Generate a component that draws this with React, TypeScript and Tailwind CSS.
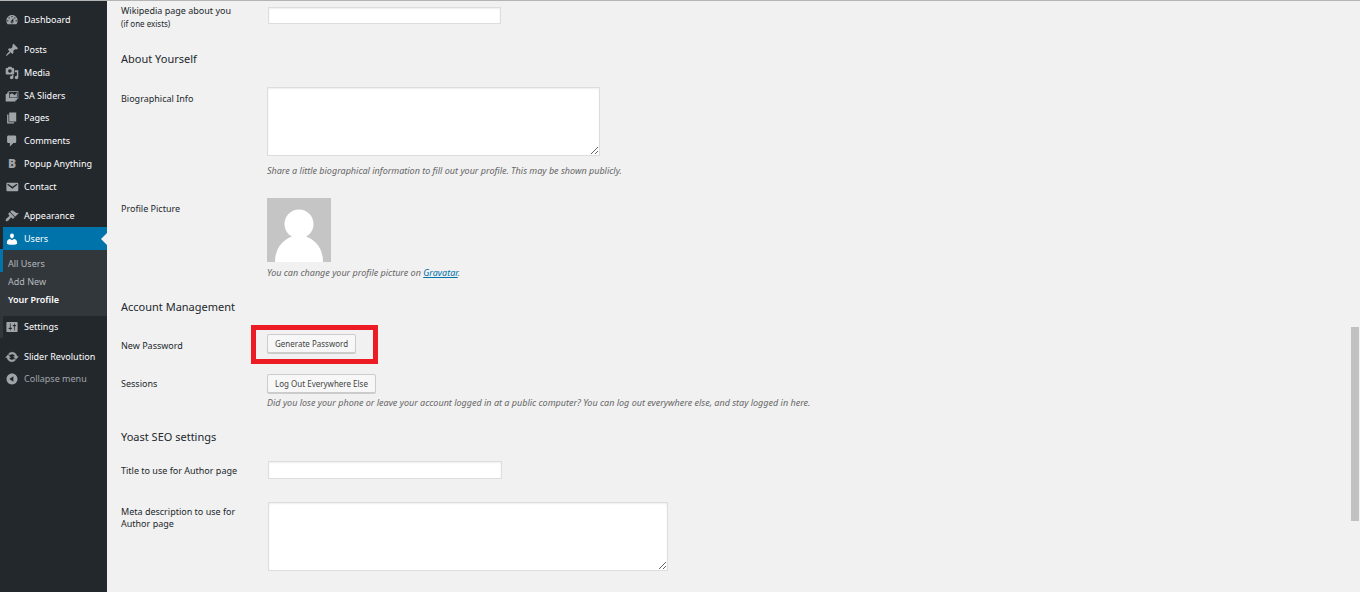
import type { ReactNode } from "react";
import clsx from "clsx";

type Item = { label: string; icon: ReactNode };

function Dashicon({ d, className }: { d: string; className?: string }) {
  return (
    <svg
      viewBox="0 0 20 20"
      className={clsx("h-[14px] w-[14px] shrink-0", className)}
      fill="currentColor"
      fillRule="evenodd"
      aria-hidden
    >
      <path d={d} />
    </svg>
  );
}

const paths = {
  dashboard:
    "M3.76 16h12.48c1.1-1.37 1.76-3.11 1.76-5 0-4.42-3.58-8-8-8s-8 3.58-8 8c0 1.89.66 3.63 1.76 5zM10 4c.55 0 1 .45 1 1s-.45 1-1 1-1-.45-1-1 .45-1 1-1zM6 6c.55 0 1 .45 1 1s-.45 1-1 1-1-.45-1-1 .45-1 1-1zm8 0c.55 0 1 .45 1 1s-.45 1-1 1-1-.45-1-1 .45-1 1-1zm-5.37 5.55L12 7v6c0 1.1-.9 2-2 2s-2-.9-2-2c0-.57.24-1.08.63-1.45zM4 10c.55 0 1 .45 1 1s-.45 1-1 1-1-.45-1-1 .45-1 1-1zm12 0c.55 0 1 .45 1 1s-.45 1-1 1-1-.45-1-1 .45-1 1-1zm-5 3c0-.55-.45-1-1-1s-1 .45-1 1 .45 1 1 1 1-.45 1-1z",
  post: "M10.44 3.02l1.82-1.82 6.36 6.35-1.83 1.82c-1.05-.68-2.48-.57-3.41.36l-.75.75c-.92.93-1.04 2.35-.35 3.41l-1.83 1.82-2.41-2.41-2.8 2.79c-.42.42-3.38 2.71-3.8 2.29s1.86-3.39 2.28-3.81l2.79-2.79L4.1 9.36l1.83-1.82c1.05.69 2.48.57 3.4-.36l.75-.75c.93-.92 1.05-2.35.36-3.41z",
  media:
    "M13 11V4c0-.55-.45-1-1-1h-1.67L9 1H5L3.67 3H2c-.55 0-1 .45-1 1v7c0 .55.45 1 1 1h10c.55 0 1-.45 1-1zM7 4.5c1.38 0 2.5 1.12 2.5 2.5S8.38 9.5 7 9.5 4.5 8.38 4.5 7 5.62 4.5 7 4.5zM14 6h5v10.5c0 1.38-1.12 2.5-2.5 2.5S14 17.88 14 16.5s1.12-2.5 2.5-2.5c.17 0 .34.02.5.05V9h-3V6zm-4 8.05V13h2v3.5c0 1.38-1.12 2.5-2.5 2.5S7 17.88 7 16.5 8.12 14 9.5 14c.17 0 .34.02.5.05z",
  sliders:
    "M5 3h14v11h-2v2h-2v2H1V7h2V5h2V3zm13 10V4H6v9h12zM7 12V8l3-2 4 3 3-4v7H7z",
  page: "M6 15V2h10v13H6zm-1 1h8v2H3V5h2v11z",
  comments:
    "M5 2h9c1.1 0 2 .9 2 2v7c0 1.1-.9 2-2 2h-2l-5 5v-5H5c-1.1 0-2-.9-2-2V4c0-1.1.9-2 2-2z",
  email:
    "M3.87 4h13.25C18.37 4 19 4.59 19 5.79v8.42c0 1.19-.63 1.79-1.88 1.79H3.87c-1.25 0-1.88-.6-1.88-1.79V5.79c0-1.2.63-1.79 1.88-1.79zm6.62 8.6l6.74-5.53c.24-.2.43-.66.13-1.07-.29-.41-.82-.42-1.17-.17l-5.7 3.86L4.8 5.83c-.35-.25-.88-.24-1.17.17-.3.41-.11.87.13 1.07z",
  appearance:
    "M14.48 11.06L7.41 3.99l1.5-1.5c.5-.56 2.3-.47 3.51.32 1.21.8 1.43 1.28 2.91 2.1 1.18.64 2.45 1.26 4.45.85zm-.71.71L6.7 4.7 4.93 6.47c-.39.39-.39 1.02 0 1.41l1.06 1.06c.39.39.39 1.03 0 1.42-.6.6-1.43 1.11-2.21 1.69-.35.26-.7.53-1.01.84C1.43 14.23.4 16.08 1.4 17.07c.99 1 2.84-.03 4.18-1.36.31-.31.58-.66.85-1.02.57-.78 1.08-1.61 1.69-2.21.39-.39 1.02-.39 1.41 0l1.06 1.06c.39.39 1.02.39 1.41 0z",
  users:
    "M10 9.25c-2.27 0-2.73-3.44-2.73-3.44C7 4.02 7.82 2 9.97 2c2.16 0 2.98 2.02 2.71 3.81 0 0-.41 3.44-2.68 3.44zm0 2.57L12.72 10c2.39 0 4.52 2.33 4.52 4.53v2.49s-3.65 1.13-7.24 1.13c-3.65 0-7.24-1.13-7.24-1.13v-2.49c0-2.25 1.94-4.48 4.47-4.48z",
  settings:
    "M18 16V4c0-.55-.45-1-1-1H3c-.55 0-1 .45-1 1v12c0 .55.45 1 1 1h14c.55 0 1-.45 1-1zM8 11h1c.55 0 1 .45 1 1s-.45 1-1 1H8v1.5c0 .28-.22.5-.5.5s-.5-.22-.5-.5V13H6c-.55 0-1-.45-1-1s.45-1 1-1h1V5.5c0-.28.22-.5.5-.5s.5.22.5.5V11zm5-2h-1c-.55 0-1-.45-1-1s.45-1 1-1h1V5.5c0-.28.22-.5.5-.5s.5.22.5.5V7h1c.55 0 1 .45 1 1s-.45 1-1 1h-1v5.5c0 .28-.22.5-.5.5s-.5-.22-.5-.5V9z",
  update:
    "M10.2 3.28c3.53 0 6.43 2.61 6.92 6h2.08l-3.5 4-3.5-4h2.32c-.45-1.97-2.21-3.45-4.32-3.45-1.45 0-2.73.71-3.54 1.78L4.95 5.66C6.23 4.2 8.11 3.28 10.2 3.28zm-.4 13.44c-3.52 0-6.43-2.61-6.92-6H.8l3.5-4c1.17 1.33 2.33 2.67 3.5 4H5.48c.45 1.97 2.21 3.45 4.32 3.45 1.45 0 2.73-.71 3.54-1.78l1.71 1.95c-1.28 1.46-3.15 2.38-5.25 2.38z",
  collapse:
    "M10 2.16c4.33 0 7.84 3.51 7.84 7.84s-3.51 7.84-7.84 7.84S2.16 14.33 2.16 10 5.67 2.16 10 2.16zm2 11.72V6.12L6.18 9.97z",
};

const contentItems: Item[] = [
  { label: "Posts", icon: <Dashicon d={paths.post} /> },
  { label: "Media", icon: <Dashicon d={paths.media} /> },
  { label: "SA Sliders", icon: <Dashicon d={paths.sliders} /> },
  { label: "Pages", icon: <Dashicon d={paths.page} /> },
  { label: "Comments", icon: <Dashicon d={paths.comments} /> },
  {
    label: "Popup Anything",
    icon: (
      <span
        className="w-[14px] shrink-0 text-center text-[12px] font-black"
        aria-hidden
      >
        B
      </span>
    ),
  },
  { label: "Contact", icon: <Dashicon d={paths.email} /> },
];

function MenuLink({ label, icon, active }: Item & { active?: boolean }) {
  return (
    <a
      href="#"
      className={clsx(
        "relative flex items-center gap-[5px] pl-[2px] whitespace-nowrap",
        active ? "h-[23px] bg-[#0073aa] text-white" : "h-[22px] text-[#a0a5aa]"
      )}
    >
      {icon}
      <span className="text-white">{label}</span>
      {active && (
        <span className="absolute top-[6px] right-0 border-y-[6px] border-r-[6px] border-y-transparent border-r-[#f1f1f1]" />
      )}
    </a>
  );
}

function Sidebar() {
  return (
    <aside className="flex w-[107px] shrink-0 bg-[#23282d] text-[9px] leading-3">
      <div className="flex w-[3px] flex-col pt-[248px]">
        <div className="h-[23px] bg-[#0073aa]" />
        <div className="h-[66px] bg-[#32373c]" />
      </div>
      <nav className="flex-1 pt-2">
        <MenuLink label="Dashboard" icon={<Dashicon d={paths.dashboard} />} />
        <div className="mt-2 grid h-[159px] auto-rows-fr items-center">
          {contentItems.map((it) => (
            <MenuLink key={it.label} {...it} />
          ))}
        </div>
        <div className="mt-[7px]">
          <MenuLink label="Appearance" icon={<Dashicon d={paths.appearance} />} />
          <MenuLink label="Users" icon={<Dashicon d={paths.users} />} active />
          {/* starts at the strip's right edge so the blue marker stays visible */}
          <ul className="h-[66px] bg-[#32373c] pt-[5px] pl-[5px] leading-[18px] text-[#b4b9be]">
            <li>
              <a href="#">All Users</a>
            </li>
            <li>
              <a href="#">Add New</a>
            </li>
            <li>
              <a href="#" className="font-semibold text-white">
                Your Profile
              </a>
            </li>
          </ul>
          <MenuLink label="Settings" icon={<Dashicon d={paths.settings} />} />
        </div>
        <div className="mt-2">
          <MenuLink
            label="Slider Revolution"
            icon={
              <Dashicon
                d={paths.update}
                className="stroke-current stroke-[0.6]"
              />
            }
          />
          <button
            type="button"
            className="flex h-[22px] items-center gap-[5px] pl-[2px] text-[#a0a5aa]"
          >
            <Dashicon d={paths.collapse} />
            Collapse menu
          </button>
        </div>
      </nav>
    </aside>
  );
}

function Row({
  label,
  htmlFor,
  className,
  labelClassName = "pt-1",
  children,
}: {
  label: ReactNode;
  htmlFor?: string;
  className?: string;
  labelClassName?: string;
  children: ReactNode;
}) {
  return (
    <div className={clsx("flex items-start", className)}>
      <div className={clsx("w-[146px] shrink-0 pr-5 text-[#23282d]", labelClassName)}>
        {htmlFor ? (
          <label htmlFor={htmlFor} className="block">
            {label}
          </label>
        ) : (
          label
        )}
      </div>
      <div className="min-w-0 flex-1">{children}</div>
    </div>
  );
}

function Heading({ className, children }: { className: string; children: ReactNode }) {
  return (
    <h2 className={clsx("text-[11px] leading-4 text-[#23282d]", className)}>
      {children}
    </h2>
  );
}

function Description({ className, children }: { className: string; children: ReactNode }) {
  return <p className={clsx("text-[#666666] italic", className)}>{children}</p>;
}

const field =
  "block max-w-full border border-[#dddddd] bg-white shadow-[inset_0_1px_2px_rgba(0,0,0,0.07)]";
const button =
  "block h-[19px] rounded-[2px] border border-[#cccccc] bg-[#f7f7f7] px-[7px] text-[8px] text-[#444444] shadow-[0_1px_0_#cccccc]";

export default function App() {
  return (
    <div className="flex min-h-screen border-t border-[#b4b4b4] bg-[#f1f1f1] font-['Noto_Sans',sans-serif] text-[9px] leading-3">
      <Sidebar />
      <main className="min-w-0 flex-1 pl-[14px]">
        <Row
          htmlFor="wikipedia"
          className="pt-[6px]"
          labelClassName="-mt-[2px]"
          label={
            <>
              <span className="block">Wikipedia page about you</span>
              <small className="mt-px block text-[8px]">(if one exists)</small>
            </>
          }
        >
          <input
            id="wikipedia"
            type="text"
            className={clsx(field, "ml-px h-[17px] w-[233px]")}
          />
        </Row>

        <Heading className="mt-[21px]">About Yourself</Heading>
        <Row
          label="Biographical Info"
          htmlFor="bio"
          className="mt-5"
          labelClassName="pt-[6px]"
        >
          <textarea id="bio" className={clsx(field, "h-[69px] w-[333px]")} />
          <Description className="mt-[9px]">
            Share a little biographical information to fill out your profile.
            This may be shown publicly.
          </Description>
        </Row>
        <Row
          label="Profile Picture"
          className="mt-[21px]"
          labelClassName="pt-[5px]"
        >
          <svg
            viewBox="0 0 64 64"
            className="block h-16 w-16 bg-[#c5c5c5]"
            fill="#ffffff"
            role="img"
            aria-label="Avatar"
          >
            <circle cx="32" cy="26" r="14.5" />
            <path d="M8 64C8 51 15 42 25 38.500L32 37l7 1.500C49 42 56 51 56 64z" />
          </svg>
          <Description className="mt-[5px]">
            You can change your profile picture on{" "}
            <a href="#" className="text-[#0073aa] underline">
              Gravatar
            </a>
            .
          </Description>
        </Row>

        <Heading className="mt-5">Account Management</Heading>
        <Row
          label="New Password"
          className="mt-[19px]"
          labelClassName="pt-[6px]"
        >
          <div className="relative w-fit">
            <button type="button" className={button}>
              Generate Password
            </button>
            <div className="pointer-events-none absolute -top-[9px] -right-[22px] -bottom-[11px] -left-4 border-[5px] border-[#ed1c24]" />
          </div>
        </Row>
        <Row label="Sessions" className="mt-[21px]">
          <button type="button" className={button}>
            Log Out Everywhere Else
          </button>
          <Description className="mt-1">
            Did you lose your phone or leave your account logged in at a public
            computer? You can log out everywhere else, and stay logged in here.
          </Description>
        </Row>

        <Heading className="mt-5">Yoast SEO settings</Heading>
        <Row label="Title to use for Author page" htmlFor="seo-title" className="mt-4">
          <input
            id="seo-title"
            type="text"
            className={clsx(field, "ml-px h-[18px] w-[234px]")}
          />
        </Row>
        <Row
          label="Meta description to use for Author page"
          htmlFor="seo-desc"
          className="mt-[23px]"
        >
          <textarea
            id="seo-desc"
            className={clsx(field, "ml-px h-[69px] w-[400px]")}
          />
        </Row>
      </main>
      <div className="w-[9px] shrink-0 pt-[326px]">
        <div className="h-[194px] w-2 bg-[#c1c1c1]" />
      </div>
    </div>
  );
}
